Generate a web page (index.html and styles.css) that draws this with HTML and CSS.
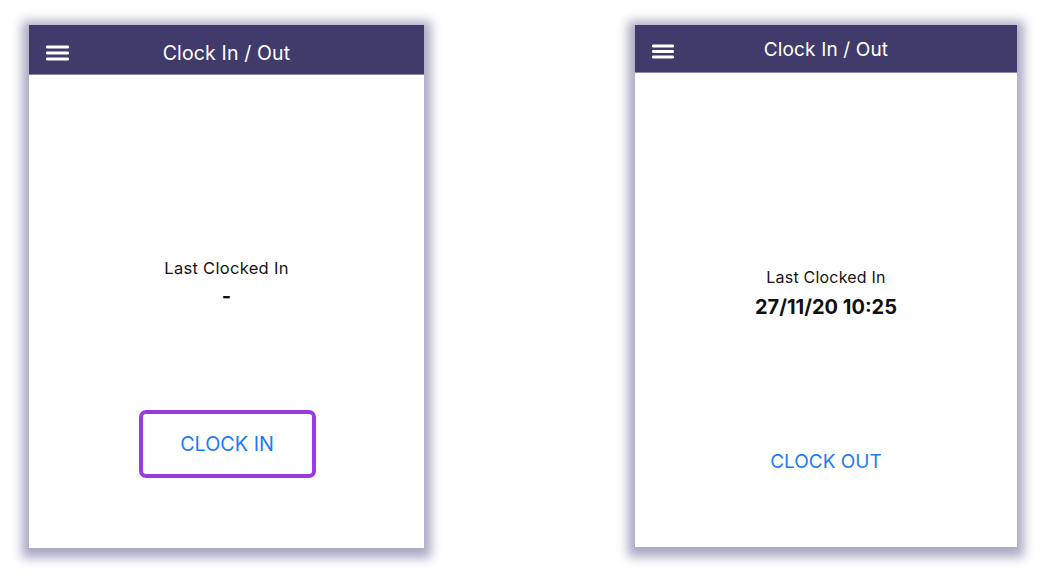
FILE: index.html
```html
<!DOCTYPE html>
<html lang="en">
<head>
<meta charset="utf-8">
<title>Clock In / Out</title>
<link rel="stylesheet" href="styles.css">
</head>
<body>
<div class="stage">
  <div class="phone phone-a">
    <header class="bar">
      <span class="menu">
        <svg width="23" height="16" viewBox="0 0 23 16"><rect x="0" y="0.5" width="23" height="3" rx="1.2"/><rect x="0" y="6.5" width="23" height="3" rx="1.2"/><rect x="0" y="12.5" width="23" height="3" rx="1.2"/></svg>
      </span>
      <h1 class="title">Clock In / Out</h1>
      <span></span>
    </header>
    <main class="content">
      <p class="label">Last Clocked In</p>
      <p class="value">-</p>
      <button class="action outlined">CLOCK IN</button>
    </main>
  </div>
  <div class="phone phone-b">
    <header class="bar">
      <span class="menu">
        <svg width="22" height="15" viewBox="0 0 22 15"><rect x="0" y="0.5" width="22" height="3" rx="1.2"/><rect x="0" y="6" width="22" height="3" rx="1.2"/><rect x="0" y="11.5" width="22" height="3" rx="1.2"/></svg>
      </span>
      <h1 class="title">Clock In / Out</h1>
      <span></span>
    </header>
    <main class="content">
      <p class="label">Last Clocked In</p>
      <p class="value">27/11/20 10:25</p>
      <button class="action">CLOCK OUT</button>
    </main>
  </div>
</div>
</body>
</html>
```

FILE: styles.css
```css
* { box-sizing: border-box; }
html, body { margin: 0; padding: 0; background: #ffffff; }
body {
  font-family: Inter, "Liberation Sans", Arial, sans-serif;
  color: #111;
  width: 1051px;
  height: 579px;
  overflow: hidden;
}
.stage {
  display: flex;
  align-items: flex-start;
  padding: 25px 0 0 29px;
  gap: 211px;
}
.phone {
  background: #fff;
  display: flex;
  flex-direction: column;
  box-shadow: 0 3px 10px 7px #aaa9c3;
}
.phone-a { width: 395px; height: 523px; }
.phone-b { width: 382px; height: 522px; }

.bar {
  background: #403b6a;
  display: grid;
  grid-template-columns: 1fr auto 1fr;
  align-items: center;
  color: #fff;
  border-bottom: 1px solid #8a86a8;
}
.phone-a .bar { height: 50px; padding: 6px 17px 0 17px; }
.phone-b .bar { height: 48px; padding: 2px 17px 0 17px; }
.menu { display: flex; }
.menu svg { fill: #fff; display: block; }
.phone-b .menu { margin-top: 4px; }
.title {
  margin: 0;
  font-weight: 400;
  font-size: 19.5px;
  letter-spacing: 0.15px;
  white-space: nowrap;
}
.phone-b .title { font-size: 19px; }

.content {
  flex: 1;
  display: flex;
  flex-direction: column;
  align-items: center;
}
.label {
  margin: 0;
  font-size: 16.5px;
  letter-spacing: 0.3px;
  line-height: 20px;
  color: #151515;
}
.value {
  margin: 0;
  font-weight: 700;
  font-size: 20px;
  line-height: 24px;
  color: #111;
}
.action {
  font-family: inherit;
  background: none;
  border: 0;
  color: #1a7cf6;
  font-size: 19.8px;
  padding: 0;
  display: flex;
  align-items: center;
  justify-content: center;
}
.phone-a .label { margin-top: 183px; }
.phone-a .value { margin-top: 6px; }
.outlined {
  margin-top: 102px;
  width: 177px;
  height: 68px;
  border: 4px solid #9a3ae0;
  border-radius: 7px;
  margin-left: 1px;
}
.phone-b .label { margin-top: 194px; font-size: 16px; letter-spacing: 0.2px; }
.phone-b .value { margin-top: 8px; font-size: 20px; }
.phone-b .action { margin-top: 130px; height: 24px; font-size: 19px; }
```
